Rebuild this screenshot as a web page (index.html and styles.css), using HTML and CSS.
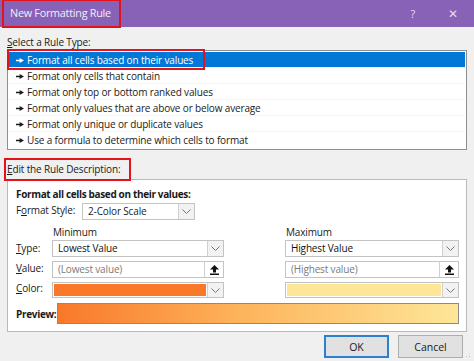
FILE: index.html
```html
<!DOCTYPE html>
<html lang="en">
<head>
    <meta charset="UTF-8">
    <title>New Formatting Rule</title>
    <link rel="stylesheet" href="styles.css">
</head>
<body>
    <div class="titlebar">
        <span class="title mark">New Formatting Rule</span>
        <span class="title-btn help">?</span>
        <span class="title-btn close">&#x2715;</span>
    </div>

    <div class="dialog">
        <div class="label top-label"><u>S</u>elect a Rule Type:</div>
        <div class="rule-list">
            <div class="mark-row"></div>
            <div class="rule selected"><span class="arrow"></span>Format all cells based on their values</div>
            <div class="rule"><span class="arrow"></span>Format only cells that contain</div>
            <div class="rule"><span class="arrow"></span>Format only top or bottom ranked values</div>
            <div class="rule"><span class="arrow"></span>Format only values that are above or below average</div>
            <div class="rule"><span class="arrow"></span>Format only unique or duplicate values</div>
            <div class="rule"><span class="arrow"></span>Use a formula to determine which cells to format</div>
        </div>

        <div class="label edit-label"><span class="mark"><u>E</u>dit the Rule Description:</span></div>
        <div class="group">
            <div class="group-title">Format all cells based on their values:</div>
            <div class="style-row">
                <span class="style-label">F<u>o</u>rmat Style:</span>
                <div class="select style-select">
                    <span class="select-text">2-Color Scale</span>
                    <span class="drop"><svg width="9" height="5" viewBox="0 0 9 5"><polyline points="0.5,0.5 4.5,4.5 8.5,0.5" fill="none" stroke="#777" stroke-width="1"/></svg></span>
                </div>
            </div>

            <div class="scale-grid">
                <span></span>
                <span class="col-head">Minimum</span>
                <span></span>
                <span class="col-head">Maximum</span>

                <span class="row-label"><u>T</u>ype:</span>
                <div class="select">
                    <span class="select-text strong">Lowest Value</span>
                    <span class="drop"><svg width="9" height="5" viewBox="0 0 9 5"><polyline points="0.5,0.5 4.5,4.5 8.5,0.5" fill="none" stroke="#777" stroke-width="1"/></svg></span>
                </div>
                <span></span>
                <div class="select">
                    <span class="select-text strong">Highest Value</span>
                    <span class="drop"><svg width="9" height="5" viewBox="0 0 9 5"><polyline points="0.5,0.5 4.5,4.5 8.5,0.5" fill="none" stroke="#777" stroke-width="1"/></svg></span>
                </div>

                <span class="row-label"><u>V</u>alue:</span>
                <div class="select">
                    <span class="select-text placeholder">(Lowest value)</span>
                    <span class="pick"><svg width="9" height="10" viewBox="0 0 9 10"><path d="M4.5 0 L9 4.5 H6 V7.5 H3 V4.5 H0 Z" fill="#111"/><rect x="0" y="8.5" width="9" height="1.5" fill="#111"/></svg></span>
                </div>
                <span></span>
                <div class="select">
                    <span class="select-text placeholder">(Highest value)</span>
                    <span class="pick"><svg width="9" height="10" viewBox="0 0 9 10"><path d="M4.5 0 L9 4.5 H6 V7.5 H3 V4.5 H0 Z" fill="#111"/><rect x="0" y="8.5" width="9" height="1.5" fill="#111"/></svg></span>
                </div>

                <span class="row-label"><u>C</u>olor:</span>
                <div class="select color">
                    <span class="swatch min-color"></span>
                    <span class="drop"><svg width="9" height="5" viewBox="0 0 9 5"><polyline points="0.5,0.5 4.5,4.5 8.5,0.5" fill="none" stroke="#777" stroke-width="1"/></svg></span>
                </div>
                <span></span>
                <div class="select color">
                    <span class="swatch max-color"></span>
                    <span class="drop"><svg width="9" height="5" viewBox="0 0 9 5"><polyline points="0.5,0.5 4.5,4.5 8.5,0.5" fill="none" stroke="#777" stroke-width="1"/></svg></span>
                </div>
            </div>

            <div class="preview-row">
                <span class="preview-label">Preview:</span>
                <div class="preview-bar"></div>
            </div>
        </div>

        <div class="buttons">
            <button class="btn default">OK</button>
            <button class="btn">Cancel</button>
        </div>
        <div class="grip"></div>
    </div>
</body>
</html>
```

FILE: styles.css
```css
body {
    margin: 0;
    background-color: #f0f0f0;
    font-family: "Open Sans", Arial, sans-serif;
    font-size: 10px;
    letter-spacing: -0.15px;
    color: #1a1a1a;
    overflow: hidden;
}

u {
    text-decoration: underline;
    text-underline-offset: 1px;
}

.titlebar {
    height: 27px;
    background-color: #8762b7;
    display: flex;
    align-items: center;
    padding-left: 2px;
    color: #f3eef9;
}

.title {
    font-size: 10.8px;
    letter-spacing: -0.25px;
    padding: 3px 8px 4px 6px;
    line-height: 18px;
}

.title-btn {
    color: #e6dcf2;
}

.help {
    margin-left: auto;
    margin-right: 33px;
    font-size: 11px;
}

.close {
    margin-right: 16px;
    font-size: 12px;
}

.mark {
    border: 2px solid #e3131b;
}

.dialog {
    padding: 0 7px;
    position: relative;
    height: 334px;
}

.label {
    line-height: 15px;
}

.top-label {
    padding-top: 8px;
    height: 15px;
}

.rule-list {
    position: relative;
    border: 1px solid #8f8f8f;
    background-color: #fff;
    padding: 1px;
    height: 96px;
}

.rule {
    height: 16px;
    line-height: 16px;
    padding-left: 7px;
    border-bottom: 1px solid #f4f4f4;
    box-sizing: border-box;
    white-space: nowrap;
}

.rule:last-child {
    border-bottom: none;
}

.rule.selected {
    background-color: #0078d7;
    color: #fff;
}

.arrow {
    display: inline-block;
    width: 8px;
    height: 5px;
    margin-right: 3px;
    vertical-align: 1px;
    background-color: currentColor;
    clip-path: polygon(0 35%, 45% 35%, 45% 0, 100% 50%, 45% 100%, 45% 65%, 0 65%);
}

.mark-row {
    position: absolute;
    left: -1px;
    top: -2px;
    width: 194px;
    height: 17px;
    border: 2px solid #e3131b;
}

.edit-label {
    margin-top: 8px;
    margin-left: -3px;
    height: 21px;
}

.edit-label .mark {
    display: inline-block;
    padding: 2px 9px 3px 1px;
    line-height: 14px;
}

.group {
    border: 1px solid #b9b9b9;
    background-color: #fff;
    height: 153px;
    padding-left: 8px;
    box-sizing: border-box;
}

.group-title {
    font-weight: bold;
    letter-spacing: -0.35px;
    margin-top: 7px;
    line-height: 14px;
}

.style-row {
    display: flex;
    align-items: center;
    margin-top: 2px;
    height: 17px;
}

.style-label {
    width: 66px;
    padding-bottom: 3px;
}

.select {
    display: flex;
    align-items: stretch;
    height: 17px;
    border: 1px solid #c3c3c3;
    background-color: #fff;
    box-sizing: border-box;
}

.style-select {
    width: 113px;
}

.select-text {
    flex: 1;
    padding-left: 5px;
    line-height: 15px;
    white-space: nowrap;
    overflow: hidden;
}

.strong {
    color: #111;
}

.placeholder {
    color: #7a7a7a;
}

.drop, .pick {
    width: 15px;
    border-left: 1px solid #d0d0d0;
    background-color: #f2f2f2;
    display: flex;
    align-items: center;
    justify-content: center;
}

.pick {
    background-color: #fff;
    width: 18px;
}

.color .swatch {
    flex: 1;
    margin: 1px;
}

.min-color {
    background-color: #f9782a;
}

.max-color {
    background-color: #fee699;
}

.scale-grid {
    display: grid;
    grid-template-columns: 36px 172px 61px 174px;
    grid-template-rows: 14px 18px 21px 20px;
    margin-top: 5px;
    align-items: end;
}

.col-head {
    padding-left: 1px;
    line-height: 14px;
}

.row-label {
    align-self: center;
}

.scale-grid .select {
    height: 17px;
}

.scale-grid .color {
    height: 16px;
}

.preview-row {
    display: flex;
    align-items: center;
    margin-top: 5px;
}

.preview-label {
    font-weight: bold;
    letter-spacing: -0.3px;
    width: 41px;
}

.preview-bar {
    width: 402px;
    height: 21px;
    border: 1px solid #8a8a8a;
    box-sizing: border-box;
    background: linear-gradient(to right, #f9782a, #fdb35a 45%, #fee699);
}

.buttons {
    display: flex;
    justify-content: flex-end;
    gap: 9px;
    padding-right: 4px;
    margin-top: 3px;
}

.btn {
    width: 65px;
    height: 23px;
    border: 1px solid #adadad;
    background-color: #e1e1e1;
    font-family: "Open Sans", Arial, sans-serif;
    font-size: 10.5px;
    color: #1a1a1a;
    padding: 0;
}

.btn.default {
    border: 2px solid #2d7fd0;
}

.grip {
    position: absolute;
    right: 3px;
    bottom: 3px;
    width: 6px;
    height: 6px;
    background: radial-gradient(circle, #b0b0b0 0.7px, transparent 1px) 0 0 / 3px 3px;
    clip-path: polygon(100% 0, 100% 100%, 0 100%);
}
```
